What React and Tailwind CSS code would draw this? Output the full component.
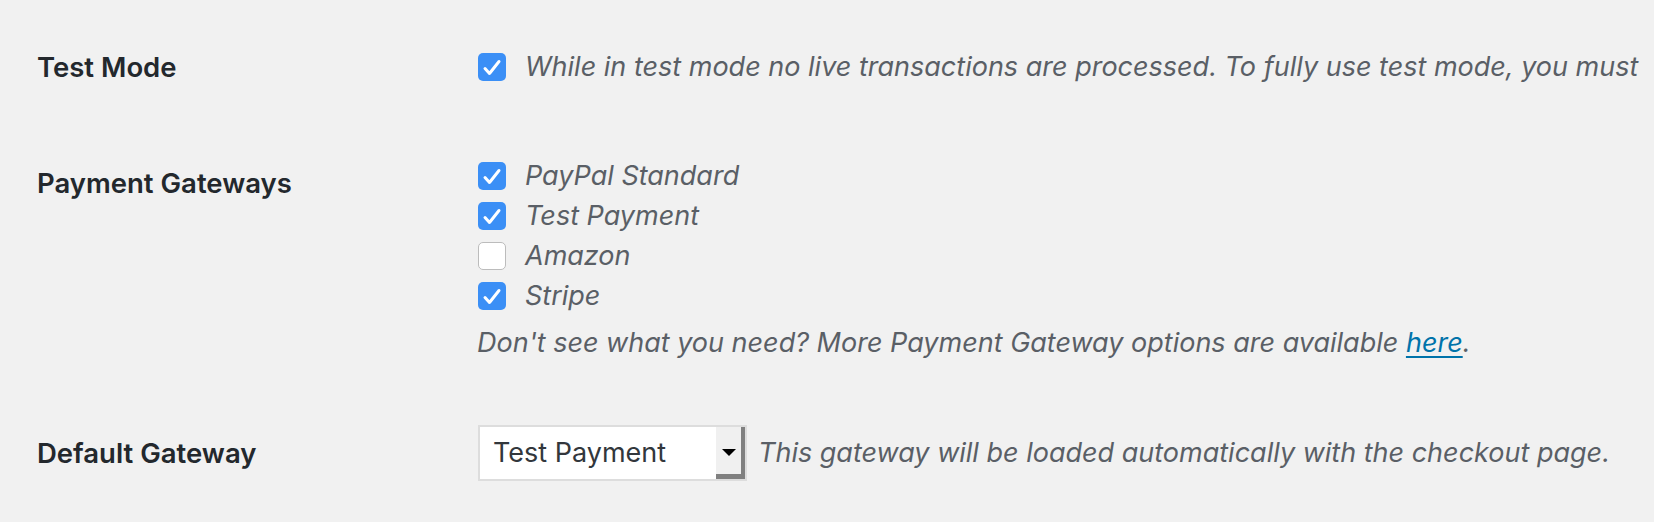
import React from "react";

const Checkbox = ({ checked }) =>
  checked ? (
    <span className="flex h-[28px] w-[28px] shrink-0 items-center justify-center rounded-[5px] bg-[#3b8ff6]">
      <svg width="28" height="28" viewBox="0 0 28 28">
        <polyline
          points="7,15.5 11.5,20.5 21,8.5"
          fill="none"
          stroke="white"
          strokeWidth="3"
          strokeLinecap="round"
          strokeLinejoin="round"
        />
      </svg>
    </span>
  ) : (
    <span className="block h-[28px] w-[28px] shrink-0 rounded-[5px] border border-[#bcbcbc] bg-white" />
  );

const gateways = [
  { name: "PayPal Standard", checked: true },
  { name: "Test Payment", checked: true },
  { name: "Amazon", checked: false },
  { name: "Stripe", checked: true },
];

export default function App() {
  return (
    <div className="min-h-[522px] w-full overflow-hidden bg-[#f1f1f1] pt-[47px] font-['Inter','Liberation_Sans',sans-serif]">
      {/* Test mode */}
      <div className="flex">
        <div className="w-[478px] shrink-0 pl-[37px] text-[27.5px] font-semibold leading-[40px] text-[#23282d]">
          Test Mode
        </div>
        <div className="flex min-w-0 items-center gap-[19px] whitespace-nowrap">
          <Checkbox checked />
          <span className="text-[27px] italic leading-[40px] text-[#5a5f66]">
            While in test mode no live transactions are processed. To fully use test mode, you must
          </span>
        </div>
      </div>

      {/* Payment gateways */}
      <div className="mt-[67px] flex">
        <div className="w-[478px] shrink-0 pl-[37px] pt-[9px] text-[27.5px] font-semibold leading-[40px] text-[#23282d]">
          Payment Gateways
        </div>
        <div className="pt-[2px]">
          {gateways.map((g) => (
            <div key={g.name} className="flex h-[40px] items-center gap-[19px]">
              <Checkbox checked={g.checked} />
              <span className="text-[27px] italic text-[#5a5f66]">{g.name}</span>
            </div>
          ))}
          <p className="mt-[7px] -ml-[1px] whitespace-nowrap text-[27px] italic leading-[40px] text-[#5a5f66]">
            Don't see what you need? More Payment Gateway options are available{" "}
            <a href="#" className="text-[#0073aa] underline decoration-2 underline-offset-4">
              here
            </a>
            .
          </p>
        </div>
      </div>

      {/* Default gateway */}
      <div className="mt-[62px] flex items-center">
        <div className="w-[478px] shrink-0 pl-[37px] text-[27.5px] font-semibold leading-[40px] text-[#23282d]">
          Default Gateway
        </div>
        <div className="flex items-center gap-[11px] whitespace-nowrap">
          <div className="flex h-[56px] w-[269px] border-2 border-[#dddddd] bg-white">
            <div className="flex flex-1 items-center pl-[13px] text-[27px] text-[#32373c]">
              Test Payment
            </div>
            <div className="flex w-[29px] items-center justify-center border-b-[5px] border-r-4 border-[#808080] bg-[#f0f0f0]">
              <svg width="14" height="8" viewBox="0 0 14 8" className="mt-[4px]">
                <polygon points="0,0 14,0 7,7" fill="#000" />
              </svg>
            </div>
          </div>
          <span className="text-[27px] italic text-[#5a5f66]">
            This gateway will be loaded automatically with the checkout page.
          </span>
        </div>
      </div>
    </div>
  );
}
